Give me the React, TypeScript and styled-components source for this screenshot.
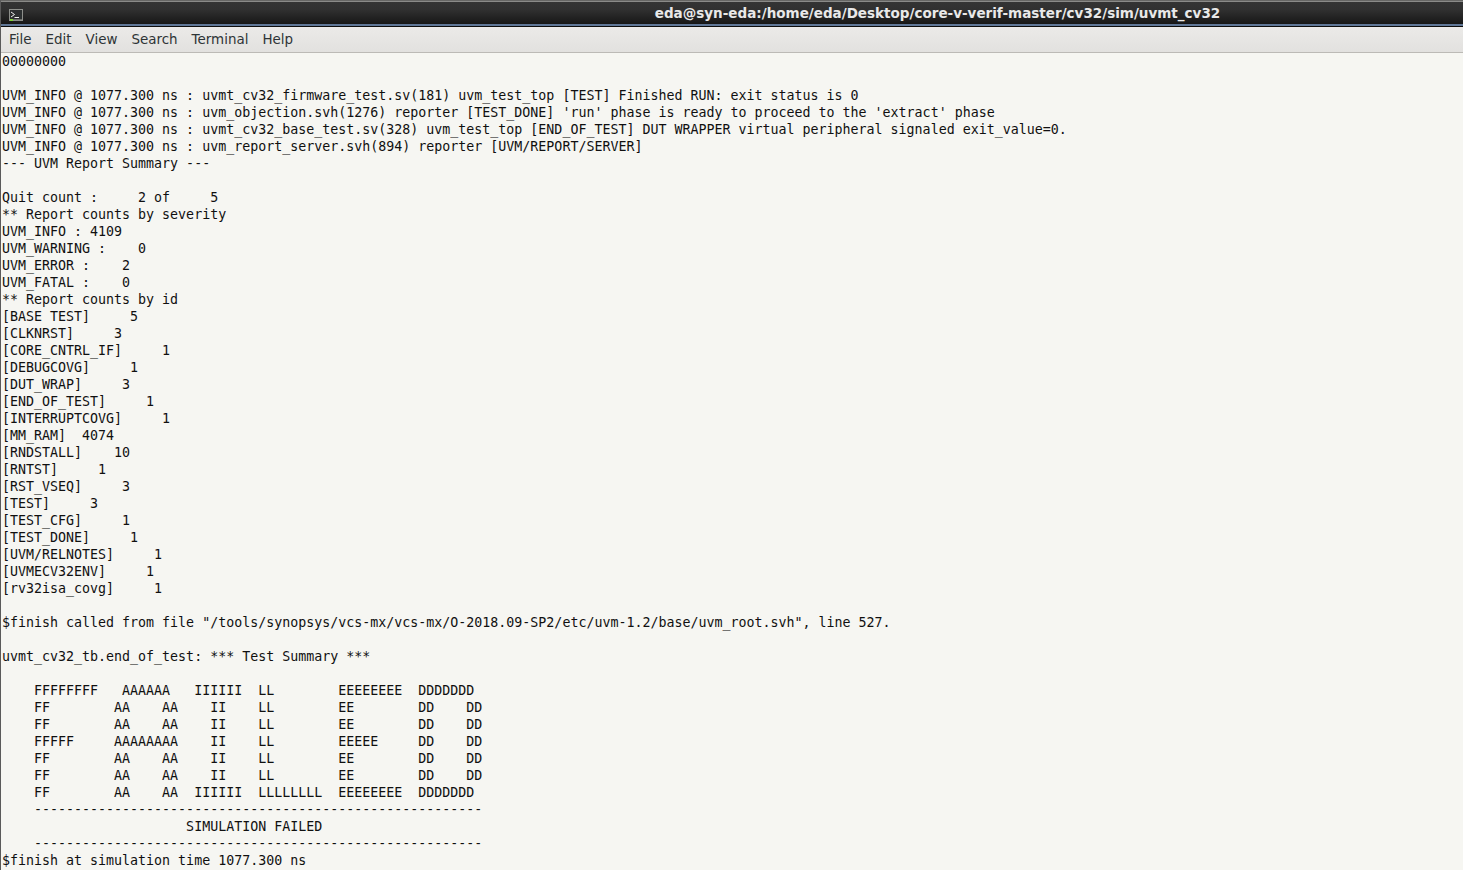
import React from 'react'
import styled, { createGlobalStyle } from 'styled-components'

const GlobalStyle = createGlobalStyle`
  html, body {
    margin: 0;
    padding: 0;
    height: 100%;
    overflow: hidden;
    background: #f6f6f2;
  }
`

const menuItems = ['File', 'Edit', 'View', 'Search', 'Terminal', 'Help']

const art = [
  '    FFFFFFFF   AAAAAA   IIIIII  LL        EEEEEEEE  DDDDDDD',
  '    FF        AA    AA    II    LL        EE        DD    DD',
  '    FF        AA    AA    II    LL        EE        DD    DD',
  '    FFFFF     AAAAAAAA    II    LL        EEEEE     DD    DD',
  '    FF        AA    AA    II    LL        EE        DD    DD',
  '    FF        AA    AA    II    LL        EE        DD    DD',
  '    FF        AA    AA  IIIIII  LLLLLLLL  EEEEEEEE  DDDDDDD',
  '    --------------------------------------------------------',
  '                       SIMULATION FAILED',
  '    --------------------------------------------------------',
]

const lines = [
  '00000000',
  '',
  'UVM_INFO @ 1077.300 ns : uvmt_cv32_firmware_test.sv(181) uvm_test_top [TEST] Finished RUN: exit status is 0',
  "UVM_INFO @ 1077.300 ns : uvm_objection.svh(1276) reporter [TEST_DONE] 'run' phase is ready to proceed to the 'extract' phase",
  'UVM_INFO @ 1077.300 ns : uvmt_cv32_base_test.sv(328) uvm_test_top [END_OF_TEST] DUT WRAPPER virtual peripheral signaled exit_value=0.',
  'UVM_INFO @ 1077.300 ns : uvm_report_server.svh(894) reporter [UVM/REPORT/SERVER]',
  '--- UVM Report Summary ---',
  '',
  'Quit count :     2 of     5',
  '** Report counts by severity',
  'UVM_INFO : 4109',
  'UVM_WARNING :    0',
  'UVM_ERROR :    2',
  'UVM_FATAL :    0',
  '** Report counts by id',
  '[BASE TEST]     5',
  '[CLKNRST]     3',
  '[CORE_CNTRL_IF]     1',
  '[DEBUGCOVG]     1',
  '[DUT_WRAP]     3',
  '[END_OF_TEST]     1',
  '[INTERRUPTCOVG]     1',
  '[MM_RAM]  4074',
  '[RNDSTALL]    10',
  '[RNTST]     1',
  '[RST_VSEQ]     3',
  '[TEST]     3',
  '[TEST_CFG]     1',
  '[TEST_DONE]     1',
  '[UVM/RELNOTES]     1',
  '[UVMECV32ENV]     1',
  '[rv32isa_covg]     1',
  '',
  '$finish called from file "/tools/synopsys/vcs-mx/vcs-mx/O-2018.09-SP2/etc/uvm-1.2/base/uvm_root.svh", line 527.',
  '',
  'uvmt_cv32_tb.end_of_test: *** Test Summary ***',
  '',
  ...art,
  '$finish at simulation time 1077.300 ns',
]

const TerminalIcon = () => (
  <svg width="14" height="12" viewBox="0 0 14 12">
    <rect x="0" y="0" width="14" height="12" fill="#8d8f8b" />
    <rect x="1" y="1" width="12" height="9" fill="#2b2f30" />
    <rect x="1" y="10" width="12" height="1" fill="#6c6e6a" />
    <rect x="1" y="10" width="3" height="2" fill="#7fd13b" />
    <path d="M2 3 L5.5 5.5 L2 8" fill="none" stroke="#f0f0f0" strokeWidth="1" />
    <path d="M5.5 8.5 H10" stroke="#f0f0f0" strokeWidth="1" />
  </svg>
)

const App: React.FC = () => {
  return (
    <Window>
      <GlobalStyle />
      <TitleBar>
        <IconSlot>
          <TerminalIcon />
        </IconSlot>
        <Title>eda@syn-eda:/home/eda/Desktop/core-v-verif-master/cv32/sim/uvmt_cv32</Title>
      </TitleBar>
      <MenuBar>
        {menuItems.map((item) => (
          <MenuItem key={item}>{item}</MenuItem>
        ))}
      </MenuBar>
      <Output>
        {lines.map((line, i) => (
          <Line key={i}>{line}</Line>
        ))}
      </Output>
    </Window>
  )
}

export default App

const Window = styled.div`
  width: 1463px;
  height: 870px;
  box-sizing: border-box;
  display: flex;
  flex-direction: column;
  overflow: hidden;
  border-left: 1px solid #5a5a5a;
`

const TitleBar = styled.div`
  flex: 0 0 27px;
  box-sizing: border-box;
  display: flex;
  align-items: center;
  padding: 0 0 0 8px;
  border-top: 1px solid #666664;
  border-bottom: 1px solid #0c0c0c;
  box-shadow: inset 0 1px 0 #8a8a88, inset 0 -2px 0 #5f7696;
  background: linear-gradient(#343434 0, #303030 35%, #1c1c1c 80%, #121212 100%);
`

const IconSlot = styled.div`
  width: 14px;
  height: 12px;
  display: flex;
  margin-top: 2px;
`

const Title = styled.div`
  flex: 1;
  text-align: center;
  padding: 0 0 1px 389px;
  font-family: 'DejaVu Sans', sans-serif;
  font-size: 13.52px;
  font-weight: 700;
  color: #e9e9e9;
  white-space: nowrap;
`

const MenuBar = styled.div`
  flex: 0 0 26px;
  box-sizing: border-box;
  display: flex;
  align-items: center;
  gap: 14px;
  padding: 0 0 1px 8px;
  background: linear-gradient(#ebeae8, #e2e1df);
  border-bottom: 1px solid #bcbab6;
`

const MenuItem = styled.span`
  font-family: 'DejaVu Sans', sans-serif;
  font-size: 13.45px;
  color: #2e3436;
`

const Output = styled.div`
  flex: 1;
  padding-left: 1px;
  background: #f6f6f2;
  overflow: hidden;
`

const Line = styled.div`
  font-family: 'DejaVu Sans Mono', monospace;
  font-size: 13.3px;
  line-height: 17px;
  height: 17px;
  color: #101010;
  white-space: pre;
`
